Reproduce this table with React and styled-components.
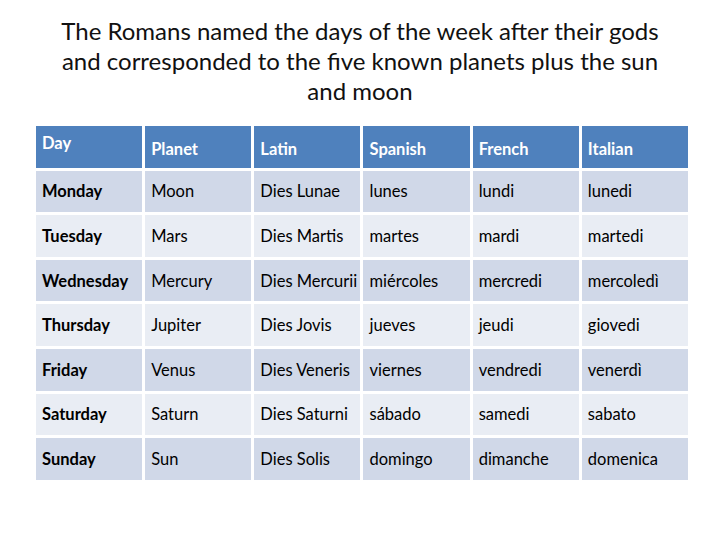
import React from "react";
import styled, { createGlobalStyle } from "styled-components";

const Global = createGlobalStyle`
  html, body { margin: 0; padding: 0; background: #ffffff; }
  body { font-family: Lato, "Liberation Sans", sans-serif; }
`;

const Page = styled.div`
  width: 720px;
  height: 540px;
  box-sizing: border-box;
  padding: 16px 0 0 36px;
  background: #fff;
`;

const Title = styled.h1`
  margin: 0 0 20px -36px;
  width: 720px;
  text-align: center;
  font-family: Lato, "Liberation Sans", sans-serif;
  font-weight: 400;
  font-size: 24px;
  line-height: 30px;
  color: #111;
`;

const Grid = styled.div`
  display: grid;
  width: 652px;
  grid-template-columns: repeat(6, minmax(0, 1fr));
  grid-auto-rows: 41.6px;
  gap: 3px;
`;

const Cell = styled.div`
  display: flex;
  align-items: ${(p) => (p.$top ? "flex-start" : "center")};
  padding: ${(p) => (p.$top ? "7px 3px 0 6px" : "0 3px 0 6px")};
  font-size: 16.5px;
  font-weight: ${(p) => (p.$bold ? 700 : 400)};
  color: ${(p) => (p.$head ? "#ffffff" : "#000000")};
  background: ${(p) => (p.$head ? "#4f81bd" : p.$odd ? "#d0d8e8" : "#e9edf4")};
  white-space: nowrap;
  padding-top: ${(p) => (p.$head && !p.$top ? "4px" : undefined)};
`;

const head = ["Planet", "Latin", "Spanish", "French", "Italian"];
const rows = [
  ["Monday", "Moon", "Dies Lunae", "lunes", "lundi", "lunedi"],
  ["Tuesday", "Mars", "Dies Martis", "martes", "mardi", "martedi"],
  ["Wednesday", "Mercury", "Dies Mercurii", "miércoles", "mercredi", "mercoledì"],
  ["Thursday", "Jupiter", "Dies Jovis", "jueves", "jeudi", "giovedi"],
  ["Friday", "Venus", "Dies Veneris", "viernes", "vendredi", "venerdì"],
  ["Saturday", "Saturn", "Dies Saturni", "sábado", "samedi", "sabato"],
  ["Sunday", "Sun", "Dies Solis", "domingo", "dimanche", "domenica"],
];

export default function App() {
  return (
    <Page>
      <Global />
      <Title>
        The Romans named the days of the week after their gods
        <br />
        and corresponded to the five known planets plus the sun
        <br />
        and moon
      </Title>
      <Grid>
        <Cell $head $bold $top>Day</Cell>
        {head.map((h) => (
          <Cell key={h} $head $bold>{h}</Cell>
        ))}
        {rows.map((r, i) =>
          r.map((c, j) => (
            <Cell key={i + "-" + j} $odd={i % 2 === 0} $bold={j === 0}>
              {c}
            </Cell>
          ))
        )}
      </Grid>
    </Page>
  );
}
